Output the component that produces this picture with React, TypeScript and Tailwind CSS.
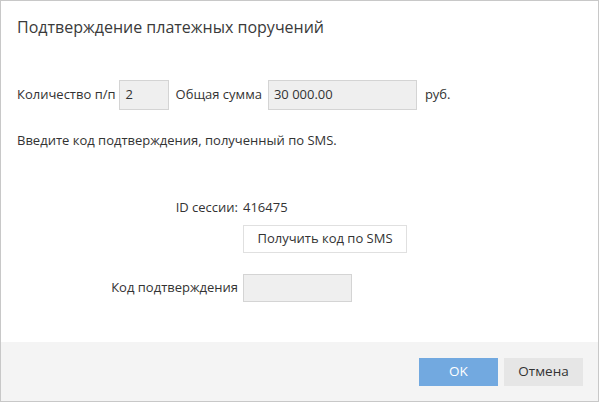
export default function App() {
    const font = { fontFamily: '"Open Sans", "Noto Sans", sans-serif' };
    return (
        <div
            className="w-[599px] h-[402px] bg-white border border-[#c8c8c8] flex flex-col text-[#333] text-[13px]"
            style={font}
        >
            <div className="flex-1 px-[16px]">
                <h1 className="pt-[14px] text-[16px] leading-[24px] text-[#3a3a3a]">
                    Подтверждение платежных поручений
                </h1>
                <div className="mt-[41px] flex items-center h-[30px]">
                    <span>Количество п/п</span>
                    <div className="ml-[3px] w-[50px] h-[30px] bg-[#efefef] border border-[#d4d4d4] px-[6px] flex items-center">
                        2
                    </div>
                    <span className="ml-[7px]">Общая сумма</span>
                    <div className="ml-[6px] w-[149px] h-[30px] bg-[#efefef] border border-[#d4d4d4] px-[5px] flex items-center">
                        30 000.00
                    </div>
                    <span className="ml-[8px]">руб.</span>
                </div>
                <p className="mt-[20px] leading-[20px]">
                    Введите код подтверждения, полученный по SMS.
                </p>
                <div className="mt-[47px] grid grid-cols-[221px_auto] gap-x-[5px] items-center justify-start">
                    <div className="text-right leading-[20px]">ID сессии:</div>
                    <div className="leading-[20px]">416475</div>
                    <div />
                    <button className="mt-[8px] w-[164px] h-[28px] bg-white border border-[#e0e0e0] text-[#333]">
                        Получить код по SMS
                    </button>
                    <div className="mt-[21px] text-right">Код подтверждения</div>
                    <div className="mt-[21px] w-[109px] h-[28px] bg-[#efefef] border border-[#d4d4d4]" />
                </div>
            </div>
            <div className="h-[59px] bg-[#f4f4f4] flex items-center justify-end gap-[6px] pr-[15px]">
                <button className="w-[79px] h-[28px] bg-[#72a9e0] text-white text-[13.5px]">OK</button>
                <button className="w-[79px] h-[28px] bg-[#e6e6e6] text-[#333] text-[13.5px]">Отмена</button>
            </div>
        </div>
    );
}
